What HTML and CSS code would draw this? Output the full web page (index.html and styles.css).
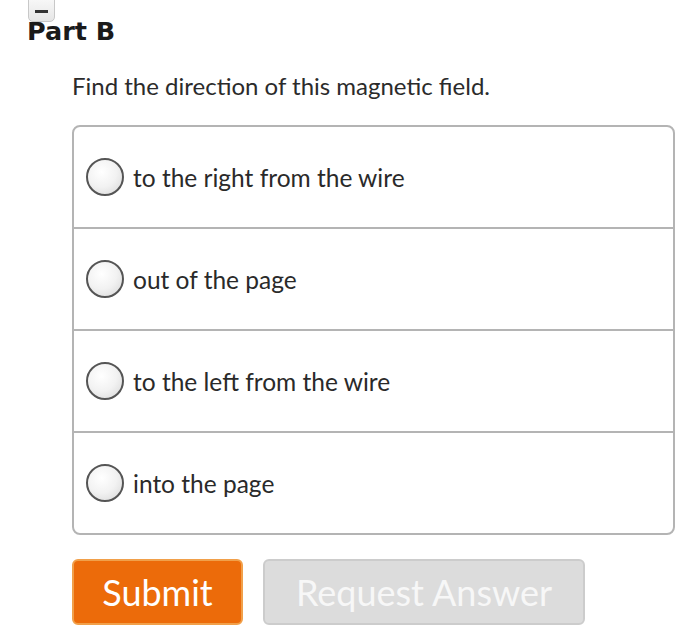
FILE: index.html
```html
<!DOCTYPE html>
<html>
<head>
<meta charset="utf-8">
<link rel="stylesheet" href="styles.css">
</head>
<body>
<div class="page">
  <div class="head">
    <span class="toggle"><span class="dash"></span></span>
    <h2 class="title">Part B</h2>
  </div>
  <div class="content">
    <p class="question">Find the direction of this magnetic field.</p>
    <div class="choices">
      <label class="choice"><span class="radio"></span><span class="label">to the right from the wire</span></label>
      <label class="choice"><span class="radio"></span><span class="label">out of the page</span></label>
      <label class="choice"><span class="radio"></span><span class="label">to the left from the wire</span></label>
      <label class="choice"><span class="radio"></span><span class="label">into the page</span></label>
    </div>
    <div class="actions">
      <button class="btn submit">Submit</button>
      <button class="btn request">Request Answer</button>
    </div>
  </div>
</div>
</body>
</html>
```
FILE: styles.css
```css
html, body {
  margin: 0;
  padding: 0;
  background: #fff;
}
.page {
  width: 700px;
  height: 644px;
  overflow: hidden;
  position: relative;
}
.head {
  position: relative;
  padding: 16px 0 0 27px;
  height: 32px;
}
.toggle {
  position: absolute;
  left: 28px;
  top: -5px;
  width: 27px;
  height: 27px;
  border: 1.5px solid #c8c8c8;
  border-radius: 5px;
  background: linear-gradient(#fafafa, #e6e6e6);
  box-sizing: border-box;
}
.dash {
  position: absolute;
  left: 5.5px;
  top: 14px;
  width: 13px;
  height: 3px;
  background: #333;
}
.title {
  position: relative;
  margin: 0;
  font-family: "DejaVu Sans", Verdana, sans-serif;
  font-weight: bold;
  font-size: 25.5px;
  line-height: 30px;
  color: #1a1a1a;
}
.content {
  padding-left: 72px;
  width: 603px;
}
.question {
  margin: 24px 0 0 0;
  font-family: Lato, "Open Sans", sans-serif;
  font-size: 24px;
  line-height: 28px;
  color: #2b2b2b;
}
.choices {
  margin-top: 25px;
  border: 2px solid #b4b4b4;
  border-radius: 8px;
  box-sizing: border-box;
  width: 603px;
}
.choice {
  display: flex;
  align-items: center;
  height: 100px;
  padding-left: 12px;
  border-top: 2px solid #b4b4b4;
}
.choice:first-child {
  border-top: none;
}
.radio {
  width: 34px;
  height: 34px;
  border: 2px solid #555;
  border-radius: 50%;
  background: radial-gradient(circle at 40% 35%, #ffffff 0%, #f2f2f2 50%, #d6d6d6 100%);
  flex: none;
}
.label {
  margin-left: 9px;
  font-family: Lato, "Open Sans", sans-serif;
  font-size: 24.5px;
  color: #2a2a2a;
}
.actions {
  display: flex;
  gap: 20px;
  margin-top: 24px;
}
.btn {
  height: 66px;
  border-radius: 6px;
  font-family: Lato, "Open Sans", sans-serif;
  font-size: 36px;
  padding: 0;
  box-sizing: border-box;
}
.submit {
  width: 171px;
  background: #ec6b0a;
  border: 2px solid #f1a04a;
  color: #fff;
}
.request {
  width: 322px;
  background: #dcdcdc;
  border: 2px solid #cccccc;
  color: #f7f7f7;
}
```
